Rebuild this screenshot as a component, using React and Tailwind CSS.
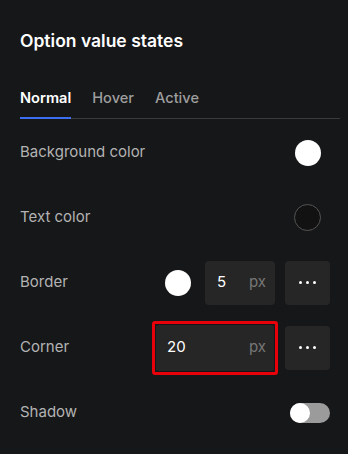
export default function App() {
  const rows = "flex h-[65px] items-center justify-between";
  const label = "text-[15px] text-[#b3b3b3]";
  const more = (
    <button className="flex h-11 w-[45px] items-center justify-center gap-[4px] rounded-[4px] bg-[#262626]">
      <span className="h-[3px] w-[3px] rounded-full bg-white"></span>
      <span className="h-[3px] w-[3px] rounded-full bg-white"></span>
      <span className="h-[3px] w-[3px] rounded-full bg-white"></span>
    </button>
  );

  return (
    <div
      className="h-[454px] w-[348px] bg-[#161719] pl-5 pr-2"
      style={{ fontFamily: "Inter, 'Liberation Sans', sans-serif" }}
    >
      <div className="pt-[29px] text-[17.5px] font-semibold leading-[24px] text-white">
        Option value states
      </div>

      <div className="mt-[35px] flex gap-[21px] border-b border-[#3b3b3b] text-[14.6px] leading-[20px]">
        <button className="-mb-px border-b-2 border-[#3d6ef0] pb-[9px] font-semibold text-white">
          Normal
        </button>
        <button className="-mb-px border-b-2 border-transparent pb-[9px] font-medium text-[#9e9e9e]">
          Hover
        </button>
        <button className="-mb-px border-b-2 border-transparent pb-[9px] font-medium text-[#9e9e9e]">
          Active
        </button>
      </div>

      <div className="mt-px pr-[10px]">
        <div className={rows}>
          <span className={label}>Background color</span>
          <span className="mr-[9px] h-[26px] w-[26px] rounded-full bg-white"></span>
        </div>

        <div className={rows}>
          <span className={label}>Text color</span>
          <span className="mr-[9px] h-[27px] w-[27px] rounded-full border border-[#555] bg-[#121212]"></span>
        </div>

        <div className={rows}>
          <span className={label}>Border</span>
          <div className="flex items-center gap-[10px]">
            <span className="mr-[4px] h-[26px] w-[26px] rounded-full bg-white"></span>
            <div className="flex h-11 w-[70px] items-center justify-between rounded-[4px] bg-[#262626] pl-3 pr-[9px] text-[15px]">
              <span className="text-white">5</span>
              <span className="text-[#777]">px</span>
            </div>
            {more}
          </div>
        </div>

        <div className={rows}>
          <span className={label}>Corner</span>
          <div className="flex items-center gap-[7px]">
            <div className="rounded-[3px] border-[3px] border-[#e8000b] p-px">
              <div className="flex h-[46px] w-[118px] items-center justify-between rounded-[2px] bg-[#262626] pl-[11px] pr-[8px] text-[15px]">
                <span className="text-white">20</span>
                <span className="text-[#777]">px</span>
              </div>
            </div>
            {more}
          </div>
        </div>

        <div className={rows}>
          <span className={label}>Shadow</span>
          <div className="flex h-5 w-10 items-center rounded-full bg-[#9b9b9b]">
            <span className="h-5 w-5 rounded-full bg-white"></span>
          </div>
        </div>
      </div>
    </div>
  );
}
